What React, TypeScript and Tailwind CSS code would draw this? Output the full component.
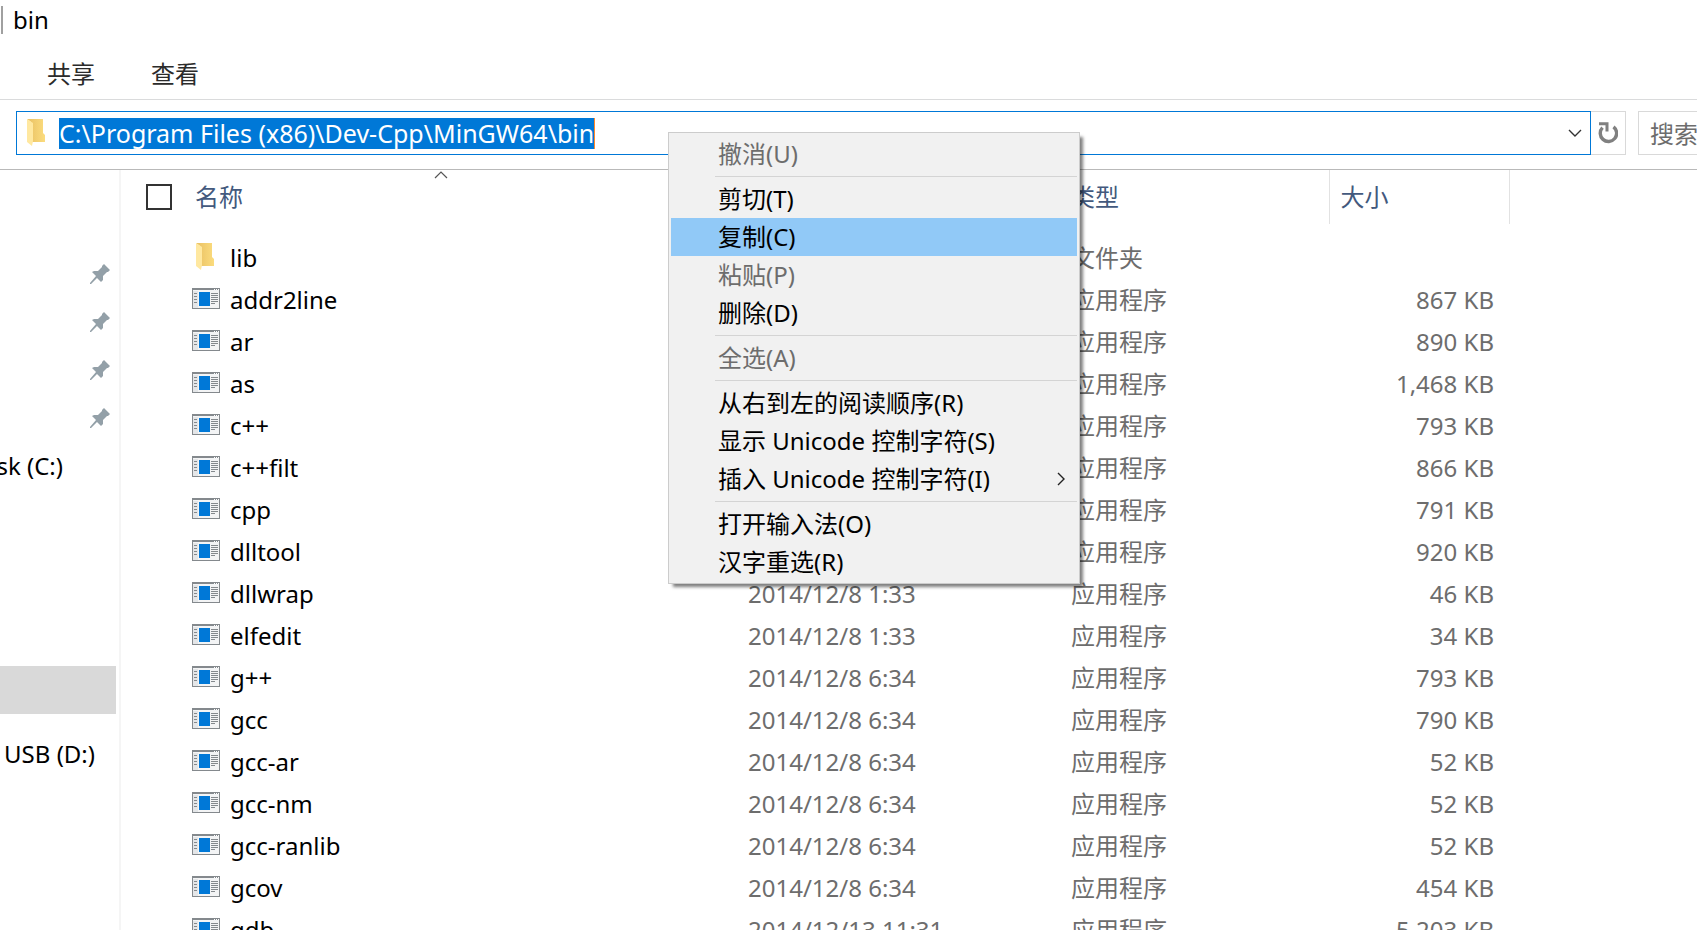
import { Fragment } from 'react'

type FileRow = {
  name: string
  date: string
  type: string
  size?: string
  folder?: boolean
}

const files: FileRow[] = [
  { name: 'lib', date: '2014/12/8 6:34', type: '文件夹', folder: true },
  { name: 'addr2line', date: '2014/12/8 1:33', type: '应用程序', size: '867 KB' },
  { name: 'ar', date: '2014/12/8 1:33', type: '应用程序', size: '890 KB' },
  { name: 'as', date: '2014/12/8 1:33', type: '应用程序', size: '1,468 KB' },
  { name: 'c++', date: '2014/12/8 6:34', type: '应用程序', size: '793 KB' },
  { name: 'c++filt', date: '2014/12/8 1:33', type: '应用程序', size: '866 KB' },
  { name: 'cpp', date: '2014/12/8 6:34', type: '应用程序', size: '791 KB' },
  { name: 'dlltool', date: '2014/12/8 1:33', type: '应用程序', size: '920 KB' },
  { name: 'dllwrap', date: '2014/12/8 1:33', type: '应用程序', size: '46 KB' },
  { name: 'elfedit', date: '2014/12/8 1:33', type: '应用程序', size: '34 KB' },
  { name: 'g++', date: '2014/12/8 6:34', type: '应用程序', size: '793 KB' },
  { name: 'gcc', date: '2014/12/8 6:34', type: '应用程序', size: '790 KB' },
  { name: 'gcc-ar', date: '2014/12/8 6:34', type: '应用程序', size: '52 KB' },
  { name: 'gcc-nm', date: '2014/12/8 6:34', type: '应用程序', size: '52 KB' },
  { name: 'gcc-ranlib', date: '2014/12/8 6:34', type: '应用程序', size: '52 KB' },
  { name: 'gcov', date: '2014/12/8 6:34', type: '应用程序', size: '454 KB' },
  { name: 'gdb', date: '2014/12/13 11:31', type: '应用程序', size: '5,203 KB' },
]

type MenuItem = { label: string; disabled?: boolean; active?: boolean; submenu?: boolean }

const menuGroups: MenuItem[][] = [
  [{ label: '撤消(U)', disabled: true }],
  [
    { label: '剪切(T)' },
    { label: '复制(C)', active: true },
    { label: '粘贴(P)', disabled: true },
    { label: '删除(D)' },
  ],
  [{ label: '全选(A)', disabled: true }],
  [
    { label: '从右到左的阅读顺序(R)' },
    { label: '显示 Unicode 控制字符(S)' },
    { label: '插入 Unicode 控制字符(I)', submenu: true },
  ],
  [{ label: '打开输入法(O)' }, { label: '汉字重选(R)' }],
]

function FolderIcon() {
  return (
    <svg width="20" height="28" viewBox="0 0 20 28" className="shrink-0" aria-hidden="true">
      <defs>
        <linearGradient id="folder-body">
          <stop offset="0" stopColor="#e9c062" />
          <stop offset="1" stopColor="#fbdc7e" />
        </linearGradient>
      </defs>
      <path d="M0 0H16V14L18 16V23H4V3Z" fill="url(#folder-body)" />
      <path d="M0 0L6 4V22L5 27L0 23Z" fill="#ffe8a0" />
    </svg>
  )
}

function AppIcon() {
  return (
    <svg width="28" height="21" viewBox="0 0 28 21" className="shrink-0" shapeRendering="crispEdges" aria-hidden="true">
      <rect width="28" height="21" fill="#84898d" />
      <rect x="1" y="2" width="26" height="18" fill="#f3f4f5" />
      <rect x="1" y="3" width="5" height="17" fill="#e4e6e8" />
      <path d="M22 1.5h1M24 1.5h1M26 1.5h1" stroke="#fff" />
      <path d="M2 5.5h3M2 8.5h3M2 11.5h3M2 14.5h3" stroke="#84898d" />
      <rect x="7" y="4" width="11" height="14" fill="#0078d7" />
      <path d="M19 5.5h7M19 7.5h7M19 9.5h7M19 11.5h7M19 13.5h7M19 15.5h4" stroke="#84898d" />
    </svg>
  )
}

function PinIcon() {
  return (
    <svg width="20" height="20" viewBox="0 0 20 20" fill="#93a0a8" aria-hidden="true">
      <path d="M14 0L20 6L18 8L17 8L13 12L13 16L11 18L7 14L1 20L0 20L0 19L6 12L2 8L4 7L8 7L12 3L12 2Z" />
    </svg>
  )
}

function RefreshIcon() {
  return (
    <svg width="20" height="22" viewBox="0 0 20 22" fill="none" stroke="#808080" aria-hidden="true">
      <path d="M15.5 4.8A8.2 8.2 0 1 1 4.5 5.6" strokeWidth="3.4" />
      <path d="M1 1.8H9V9.5" strokeWidth="3" />
    </svg>
  )
}

function ContextMenu() {
  return (
    <div
      role="menu"
      className="absolute top-[132px] left-[668px] w-[412px] border border-[#cccccc] bg-[#f1f1f1] p-[2px] shadow-[4px_4px_3px_-1px_rgba(0,0,0,0.5)]"
    >
      {menuGroups.map((group, i) => (
        <Fragment key={i}>
          {i > 0 && <div role="separator" className="my-[3px] ml-11 h-px bg-[#d4d4d4]" />}
          {group.map((item) => (
            <button
              key={item.label}
              role="menuitem"
              disabled={item.disabled}
              className={`flex h-[38px] w-full items-center justify-between pr-3 pl-[47px] text-left ${
                item.active ? 'bg-[#91c9f7]' : ''
              } ${item.disabled ? 'text-[#6d6d6d]' : 'text-black'}`}
            >
              {item.label}
              {item.submenu && (
                <svg width="8" height="14" viewBox="0 0 8 14" fill="none" stroke="#222" strokeWidth="1.4">
                  <path d="M1 1l6 6-6 6" />
                </svg>
              )}
            </button>
          ))}
        </Fragment>
      ))}
    </div>
  )
}

export default function App() {
  return (
    <div className="relative flex h-screen flex-col overflow-hidden bg-white font-['Noto_Sans','Noto_Sans_CJK_SC',sans-serif] text-[24px] leading-8 text-black">
      {/* 标题栏 */}
      <header className="flex h-10 shrink-0 items-center">
        <span className="ml-px h-7 w-[2px] bg-[#a0a0a0]" />
        <h1 className="ml-[10px]">bin</h1>
      </header>

      {/* 选项卡 */}
      <nav className="flex h-[60px] shrink-0 items-center gap-14 border-b border-[#dadbdc] pt-2 pl-[47px] text-[#2b2b2b]">
        <button>共享</button>
        <button>查看</button>
      </nav>

      {/* 地址栏 */}
      <div className="flex h-[70px] shrink-0 items-start border-b border-[#b9b9b9] pt-[11px] pl-4">
        <div className="flex h-11 flex-1 items-center border border-[#0078d7] pr-2 pl-[10px]">
          <FolderIcon />
          <input
            aria-label="地址"
            defaultValue="C:\Program Files (x86)\Dev-Cpp\MinGW64\bin"
            className="ml-3 field-sizing-content h-[31px] border-r border-[#ff8728] bg-[#0078d7] text-[25px] text-white outline-none"
          />
          <button aria-label="历史记录" className="ml-auto">
            <svg width="14" height="9" viewBox="0 0 14 9" fill="none" stroke="#333" strokeWidth="1.4">
              <path d="M1 1l6 6 6-6" />
            </svg>
          </button>
        </div>
        <button
          aria-label="刷新"
          className="flex h-11 w-[35px] items-center justify-center border border-l-0 border-[#d9d9d9]"
        >
          <RefreshIcon />
        </button>
        <input
          aria-label="搜索"
          placeholder="搜索"
          className="ml-3 h-11 w-[59px] border border-r-0 border-[#d9d9d9] pl-[11px] outline-none placeholder:text-[#6d6d6d]"
        />
      </div>

      <div className="flex min-h-0 flex-1">
        {/* 导航窗格 */}
        <aside className="w-[121px] shrink-0 overflow-hidden border-r-2 border-[#f5f5f5] pt-20">
          {[0, 1, 2, 3].map((n) => (
            <div key={n} className="flex h-12 items-center justify-end pr-[9px]">
              <PinIcon />
            </div>
          ))}
          <div className="flex h-12 w-[63px] items-center justify-end whitespace-nowrap">sk (C:)</div>
          <div className="mt-44 h-12 w-[116px] bg-[#d9d9d9]" />
          <div className="mt-4 flex h-12 w-[95px] items-center justify-end whitespace-nowrap">USB (D:)</div>
        </aside>

        {/* 文件列表 */}
        <main className="min-w-0 flex-1 overflow-hidden">
          <table className="w-full table-fixed border-collapse">
            <colgroup>
              <col className="w-[616px]" />
              <col className="w-[323px]" />
              <col className="w-[269px]" />
              <col className="w-[180px]" />
              <col />
            </colgroup>
            <thead>
              <tr className="h-[54px] text-left text-[#43597d]">
                <th className="relative pl-[25px] font-normal">
                  <div className="flex items-center gap-[23px]">
                    <input
                      type="checkbox"
                      aria-label="全部选择"
                      className="size-[26px] appearance-none border-2 border-[#333]"
                    />
                    名称
                  </div>
                  <svg
                    width="14"
                    height="8"
                    viewBox="0 0 14 8"
                    fill="none"
                    stroke="#555"
                    strokeWidth="1.2"
                    className="absolute top-px left-[313px]"
                  >
                    <path d="M1 7l6-6 6 6" />
                  </svg>
                </th>
                <th className="pl-[11px] font-normal">修改日期</th>
                <th className="border-r border-[#e2e2e2] pl-[11px] font-normal">类型</th>
                <th className="border-r border-[#e2e2e2] pl-[11px] font-normal">大小</th>
                <th />
              </tr>
              <tr className="h-[13px]" />
            </thead>
            <tbody className="text-[#6d6d6d]">
              {files.map((file) => (
                <tr key={file.name} className="h-[42px]">
                  <td className="text-black">
                    <div className="flex items-center gap-[10px] pl-[71px]">
                      <span className="flex w-7 justify-center pb-[3px]">
                        {file.folder ? <FolderIcon /> : <AppIcon />}
                      </span>
                      {file.name}
                    </div>
                  </td>
                  <td className="pl-[11px]">{file.date}</td>
                  <td className="pl-[11px]">{file.type}</td>
                  <td className="pr-[15px] text-right">{file.size}</td>
                  <td />
                </tr>
              ))}
            </tbody>
          </table>
        </main>
      </div>

      <ContextMenu />
    </div>
  )
}
